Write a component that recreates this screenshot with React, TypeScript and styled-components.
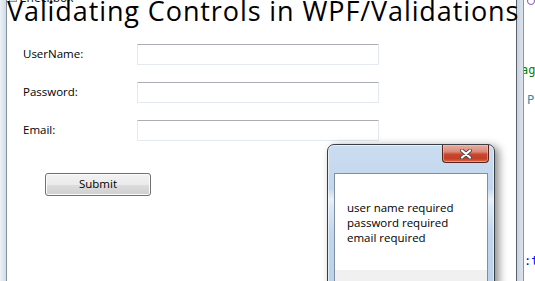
import React from "react";
import styled, { createGlobalStyle } from "styled-components";

const Global = createGlobalStyle`
  html, body { margin: 0; padding: 0; background: #fff; overflow: hidden; }
  #root { width: 535px; height: 281px; }
`;

const UI_FONT = `"Open Sans", "Noto Sans", "DejaVu Sans", sans-serif`;

const Screen = styled.div`
  position: relative;
  display: flex;
  width: 535px;
  height: 281px;
  overflow: hidden;
  background: #fff;
  font-family: ${UI_FONT};
`;

const LeftFrame = styled.div`
  width: 6px;
  flex: none;
  background: linear-gradient(to right, #eef2f7, #d2dce8);
  border-right: 1px solid #8592a2;
`;

const Main = styled.main`
  width: 509px;
  flex: none;
  display: flex;
  flex-direction: column;
  background: #fff;
  position: relative;
  z-index: 1;
`;

const CheckRow = styled.div`
  display: flex;
  align-items: flex-end;
  gap: 2px;
  height: 4px;
  margin-left: 2px;
  font-size: 12px;
  line-height: 12px;
  color: #111;
  overflow: visible;
`;

const CheckBox = styled.span`
  width: 6px;
  height: 9px;
  margin-bottom: 2px;
  flex: none;
  border: 1px solid #8f8f8f;
  background: linear-gradient(#f4f4f4, #e2e2e2);
`;

const CheckLabel = styled.span`
  margin-bottom: 0px;
`;

const Title = styled.h1`
  margin: -8px 0 0 0;
  font-family: ${UI_FONT};
  font-weight: 400;
  font-size: 27px;
  letter-spacing: 0.9px;
  line-height: 30px;
  color: #000;
  white-space: nowrap;
`;

const Form = styled.div`
  display: flex;
  flex-direction: column;
  gap: 17px;
  margin-top: 18px;
  padding-left: 16px;
`;

const Row = styled.div`
  display: flex;
  align-items: center;
  height: 21px;
`;

const Label = styled.label`
  width: 114px;
  flex: none;
  padding-bottom: 3px;
  font-size: 11.5px;
  color: #000;
`;

const TextBox = styled.div`
  width: 240px;
  height: 19px;
  border: 1px solid #e3e9ef;
  border-top-color: #abadb3;
  background: #fff;
  border-radius: 1px;
`;

const SubmitButton = styled.button`
  margin: 32px 0 0 38px;
  width: 106px;
  height: 23px;
  padding: 0 0 2px 0;
  border: 1px solid #707070;
  border-radius: 3px;
  background: linear-gradient(#f2f2f2 0%, #ebebeb 50%, #dddddd 51%, #cfcfcf 100%);
  box-shadow: inset 0 0 0 1px #fcfcfc;
  font-family: ${UI_FONT};
  font-size: 11.5px;
  color: #000;
`;

const RightFrame = styled.div`
  width: 6px;
  flex: none;
  background: linear-gradient(to right, #c9d4e0, #dbe3ec);
  border-left: 1px solid #59606a;
  border-right: 1px solid #8d949c;
`;

const CodePane = styled.div`
  flex: 1;
  display: flex;
  flex-direction: column;
  background: #fff;
  font-family: "DejaVu Sans Mono", "Liberation Mono", monospace;
  font-size: 12px;
  line-height: 15px;
  white-space: nowrap;
  overflow: hidden;
`;

const CodeLine = styled.div<{ $color: string; $top: number; $indent: number }>`
  color: ${(p) => p.$color};
  margin-top: ${(p) => p.$top}px;
  margin-left: ${(p) => p.$indent}px;
`;

const Marker = styled.div`
  width: 6px;
  height: 6px;
  margin: -3px 0 0 3px;
  border: 1px solid #8a4fb0;
  border-radius: 50%;
`;

/* Message box window */
const Dialog = styled.div`
  position: absolute;
  left: 327px;
  top: 144px;
  width: 166px;
  height: 160px;
  z-index: 5;
  display: flex;
  flex-direction: column;
  border: 1px solid #3a3f46;
  border-radius: 7px 7px 0 0;
  background: linear-gradient(
    to bottom,
    #cadcf0 0px,
    #c2d7ed 44px,
    #e9f1fa 54px,
    #dae8f6 62px,
    #c0d6ec 90px,
    #bad1ea 160px
  );
  box-shadow: 4px 2px 8px rgba(0, 0, 0, 0.45), inset 0 0 0 1px rgba(255, 255, 255, 0.55);
`;

const TitleBar = styled.div`
  height: 28px;
  flex: none;
  display: flex;
  justify-content: flex-end;
  align-items: flex-start;
  padding-right: 5px;
`;

const CloseButton = styled.div`
  width: 45px;
  height: 17px;
  display: flex;
  align-items: center;
  justify-content: center;
  border: 1px solid #5a2219;
  border-top: none;
  border-radius: 0 0 4px 4px;
  background: linear-gradient(
    to bottom,
    #e7ada0 0%,
    #d98a79 40%,
    #c7472f 55%,
    #c53f27 80%,
    #db6a50 100%
  );
  box-shadow: inset 0 0 0 1px rgba(255, 210, 200, 0.45);
`;

const Client = styled.div`
  flex: 1;
  margin: 0 6px;
  display: flex;
  flex-direction: column;
  border: 1px solid #7f8fa3;
  background: #f0f0f0;
`;

const Message = styled.div`
  height: 70px;
  padding: 26px 0 0 12px;
  background: #fff;
  font-size: 11.5px;
  line-height: 15px;
  color: #000;
`;

const CloseGlyph = () => (
  <svg width="12" height="10" viewBox="0 0 12 10">
    <path d="M2 1.5 L10 8.5 M10 1.5 L2 8.5" stroke="#4b4b4b" strokeWidth="4" strokeLinecap="round" />
    <path d="M2 1.5 L10 8.5 M10 1.5 L2 8.5" stroke="#ffffff" strokeWidth="2.2" strokeLinecap="round" />
  </svg>
);

const fields = ["UserName:", "Password:", "Email:"];
const messages = ["user name required", "password required", "email required"];

export default function App() {
  return (
    <>
      <Global />
      <Screen>
        <LeftFrame />
        <Main>
          <CheckRow>
            <CheckBox />
            <CheckLabel>Checkbox</CheckLabel>
          </CheckRow>
          <Title>Validating Controls in WPF/Validations</Title>
          <Form>
            {fields.map((f) => (
              <Row key={f}>
                <Label>{f}</Label>
                <TextBox />
              </Row>
            ))}
          </Form>
          <SubmitButton>Submit</SubmitButton>
        </Main>
        <RightFrame />
        <CodePane>
          <Marker />
          <CodeLine $color="#008000" $top={58} $indent={-3}>ag</CodeLine>
          <CodeLine $color="#2b91af" $top={15} $indent={3}>P</CodeLine>
          <CodeLine $color="#0000ff" $top={146} $indent={0}>:t</CodeLine>
        </CodePane>
        <Dialog>
          <TitleBar>
            <CloseButton>
              <CloseGlyph />
            </CloseButton>
          </TitleBar>
          <Client>
            <Message>
              {messages.map((m) => (
                <div key={m}>{m}</div>
              ))}
            </Message>
          </Client>
        </Dialog>
      </Screen>
    </>
  );
}
